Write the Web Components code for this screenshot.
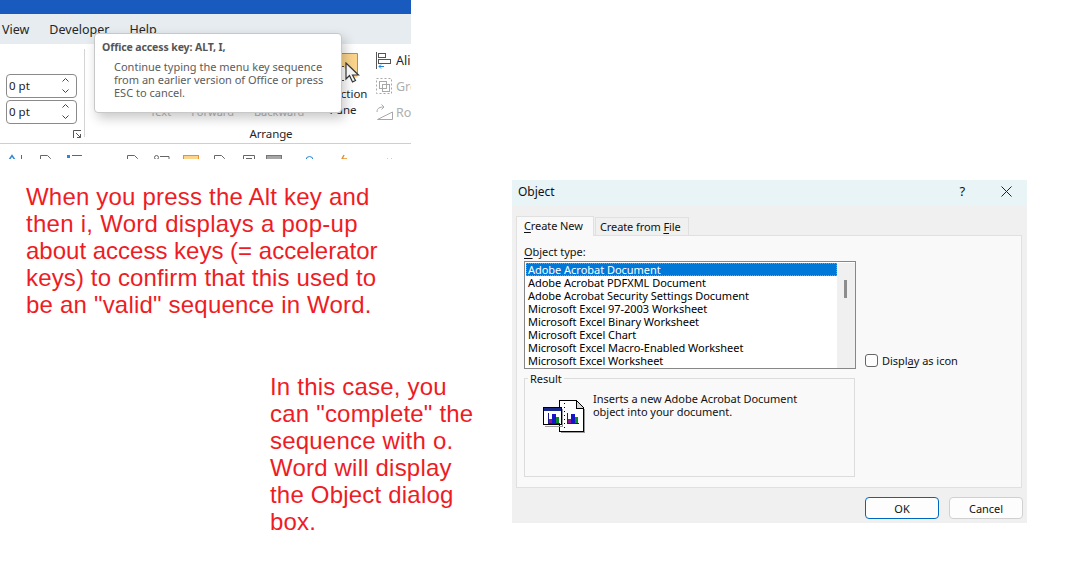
<!DOCTYPE html>
<html>
<head>
<meta charset="utf-8">
<title>Office access key</title>
<style>
  html, body { margin: 0; padding: 0; background: #fff; }
  body { width: 1090px; height: 577px; overflow: hidden; font-family: "Noto Sans", sans-serif; }
  .lower { display: flex; align-items: flex-start; }
</style>
</head>
<body>
<ribbon-shot></ribbon-shot>
<div class="lower">
  <annotation-notes></annotation-notes>
  <object-dialog></object-dialog>
</div>

<script>
// small helper, every element is just a template in a shadow root
function define(name, html, setup) {
  const tmpl = document.createElement("template");
  tmpl.innerHTML = html;
  customElements.define(name, class extends HTMLElement {
    constructor() {
      super();
      this.attachShadow({ mode: "open" }).appendChild(tmpl.content.cloneNode(true));
    }
    connectedCallback() {
      if (setup) setup(this);
    }
  });
}

// spin box of the ribbon
define("spin-box", `
  <style>
    :host { display: flex; align-items: center; justify-content: space-between; box-sizing: border-box;
      width: 71px; height: 24px; padding: 0 6px 1px 2px; border: 1px solid #8a8a8a; border-radius: 4px;
      font: 11.5px "Noto Sans", sans-serif; color: #222; background: #fff; }
    svg { display: block; }
  </style>
  <slot></slot>
  <svg width="9" height="17" viewBox="0 0 9 17" fill="none" stroke="#444" stroke-width="1">
    <path d="M1.5 4.5 4.5 1.5 7.5 4.5"/><path d="M1.5 12.5 4.5 15.5 7.5 12.5"/>
  </svg>
`);

// the "Office access key" tooltip, lies over the ribbon
define("access-tooltip", `
  <style>
    :host { display: block; position: absolute; left: 94px; top: 33px; box-sizing: border-box;
      width: 248px; height: 80px; padding: 7px 6px 0 7px; background: #fff; border: 1px solid #c8c8c8;
      border-radius: 4px; box-shadow: 3px 5px 12px rgba(0,0,0,.22); color: #5c5c5c;
      font: 11px/13px "Noto Sans", sans-serif; }
    b { display: block; font-size: 10.5px; font-weight: 700; color: #555; margin-bottom: 6px; letter-spacing: -.1px; }
    p { margin: 0 0 0 12px; letter-spacing: 0; }
  </style>
  <b>Office access key: ALT, I,</b>
  <p>Continue typing the menu key sequence<br>from an earlier version of Office or press<br>ESC to cancel.</p>
`);

define("ribbon-shot", `
  <style>
    :host { display: block; position: relative; width: 411px; height: 159px; overflow: hidden;
      font: 12px "Noto Sans", sans-serif; color: #262626; background: #fff; }
    .title { height: 14px; background: #185abd; }
    .tabs { height: 30px; background: #e6ecf0; display: flex; gap: 20px; padding: 7px 0 0 2px; box-sizing: border-box;
      font-size: 12.5px; line-height: 17px; }
    .body { height: 99px; display: flex; border-bottom: 1px solid #cfcfcf; }
    .spins { flex: 0 0 84px; box-sizing: border-box; padding: 30px 0 0 6px; display: flex; flex-direction: column; gap: 2px; position: relative; }
    .launcher { position: absolute; left: 73px; top: 86px; }
    .sep { flex: 0 0 1px; height: 88px; margin-top: 5px; background: #d4d4d4; }
    .arrange { flex: 0 0 286px; display: flex; flex-direction: column; position: relative; }
    .btns { height: 78px; display: flex; }
    .faded { display: flex; gap: 20px; padding: 60px 0 0 65px; color: #b5b5b5; font-size: 11px; line-height: 16px; height: 16px; width: 180px; box-sizing: border-box; flex: none; }
    .sel { margin-left: 50px; padding-top: 9px; width: 56px; flex: none; box-sizing: border-box; font-size: 11.5px; line-height: 16px; text-align: center; }
    .sel svg { display: block; margin: 0 0 5px 15px; }
    .group { text-align: center; line-height: 16px; margin-top: 4px; padding-left: 86px; font-size: 11.5px; letter-spacing: -.1px; }
    .side { flex: 0 0 40px; box-sizing: border-box; padding: 6px 0 0 5px; display: flex; flex-direction: column; gap: 6px; white-space: nowrap; }
    .side div { display: flex; align-items: center; gap: 2px; height: 20px; font-size: 12.5px; }
    .off { color: #aeaeae; }
    .quick { height: 15px; }
    .quick svg { display: block; margin-top: 1px; }
    .cursor { position: absolute; left: 345px; top: 62px; }
  </style>
  <div class="title"></div>
  <div class="tabs"><span>View</span><span>Developer</span><span>Help</span></div>
  <div class="body">
    <div class="spins">
      <spin-box>0 pt</spin-box>
      <spin-box>0 pt</spin-box>
      <svg class="launcher" width="9" height="9" viewBox="0 0 9 9" fill="none" stroke="#555">
        <path d="M.5 8V.5H8"/><path d="M3 3 7.5 7.5M7.500 4v3.500H4"/>
      </svg>
    </div>
    <div class="sep"></div>
    <div class="arrange">
      <div class="btns">
        <div class="faded"><span>Text</span><span>Forward</span><span>Backward</span></div>
        <div class="sel">
          <svg width="28" height="28" viewBox="0 0 28 28" fill="none">
            <path d="M.5.5h27v24h-4L12 12.500H.5z" fill="#fbd58c" stroke="none"/>
            <path d="M.5.5h27V20" stroke="#d9822b"/>
            <path d="M11 13.500h3M11 27.500h3" stroke="#444"/>
          </svg>
          Selection<br>Pane
        </div>
      </div>
      <div class="group">Arrange</div>
    </div>
    <div class="side">
      <div><svg width="18" height="17" viewBox="0 0 18 17" fill="none" stroke="#555"><path d="M.5 0v17"/><rect x="2.500" y="1.500" width="7" height="4"/><rect x="2.500" y="7.500" width="12" height="4"/><path d="M3 14.500h5M5 12.500l-2 2 2 2" stroke="#1f86d9"/></svg>Ali</div>
      <div class="off"><svg width="18" height="17" viewBox="0 0 18 17" fill="none" stroke="#a8a8a8"><path stroke-dasharray="2 2" d="M.5.5h15v15H.5z"/><rect x="3.500" y="3.500" width="7" height="7"/><rect x="6.500" y="6.500" width="7" height="7"/></svg>Gro</div>
      <div class="off"><svg width="18" height="17" viewBox="0 0 18 17" fill="none" stroke="#a8a8a8"><path d="M1.500 15.500 16.500 8v7.500z"/><path d="M1 8c0-4 3-5 7-5M5.500.5 8 3 5.500 5.500"/></svg>Rot</div>
    </div>
  </div>
  <div class="quick">
    <svg width="411" height="15" viewBox="0 0 411 15" fill="none" stroke="#666">
      <path d="M9 15 12 10.500 15 15" stroke="#2b88d8" stroke-width="1.500"/><path d="M21.500 10v5"/>
      <path d="M40.500 15v-4.500h7l3 3v2"/>
      <rect x="67" y="10" width="3" height="3" fill="#2b88d8" stroke="none"/><path d="M72 10.500h10"/>
      <path d="M127.500 15v-4.500h7l3 3v2"/>
      <circle cx="156.500" cy="12.500" r="2"/><path d="M160 11.500h9v3"/>
      <rect x="183.500" y="10.500" width="15" height="6" fill="#fbd58c" stroke="#e8912d"/>
      <path d="M214.500 15v-4.500h7l3 3v2"/>
      <path d="M243.500 15v-4.500h11v4.500M246 13.500h6"/>
      <rect x="266.500" y="10.500" width="15" height="6" fill="#a6a6a6" stroke="#777"/>
      <circle cx="309.500" cy="15" r="3.500" stroke="#2b88d8"/>
      <path d="M344 10 342 14h5" stroke="#e8912d" stroke-width="1.500"/>
      <path d="M387.500 13v2M391.500 13v2" stroke="#ccc"/>
    </svg>
  </div>
  <access-tooltip></access-tooltip>
  <svg class="cursor" width="16" height="22" viewBox="0 0 16 22">
    <path d="M1 1v16l3.500-3.500 3 6.500 3-1.500-3-5.500h6z" fill="#f4f4f4" stroke="#333" stroke-width="1.200"/>
  </svg>
`);

// red notes on the white page
define("annotation-notes", `
  <style>
    :host { display: block; width: 512px; flex: none; box-sizing: border-box; padding: 24px 0 0 26px;
      font: 24px/27px "Liberation Sans", Arial, sans-serif; letter-spacing: .2px; color: #ee1c25; }
    p { margin: 0; }
    .second { margin: 55px 0 0 244px; }
    .l2 { letter-spacing: .27px; }
    .l3 { letter-spacing: 0; }
    .l4 { letter-spacing: .14px; }
  </style>
  <p>When you press the Alt key and<br><span class="l2">then i, Word displays a pop-up</span><br><span class="l3">about access keys (= accelerator</span><br><span class="l4">keys) to confirm that this used to</span><br>be an "valid" sequence in Word.</p>
  <p class="second">In this case, you<br>can "complete" the<br>sequence with o.<br>Word will display<br>the Object dialog<br>box.</p>
`);

// object type list with its scrollbar
define("object-list", `
  <style>
    :host { display: flex; box-sizing: border-box; width: 332px; height: 108px; border: 1px solid #878787;
      background: #fff; color: #000; overflow: hidden; }
    .rows { flex: 1; padding: 1px 0 0 1px; min-width: 0; }
    .scroll { width: 18px; background: #f0f0f0; padding: 17px 0 0 7px; box-sizing: border-box; margin-top: 1px; }
    .thumb { width: 3px; height: 18px; background: #8d8d8d; }
    ::slotted(div) { height: 13px; line-height: 13px; padding-left: 2px; white-space: nowrap; }
    ::slotted(.sel) { background: #0078d7; color: #fff; outline: 1px dotted #e08a2c; outline-offset: -1px; }
  </style>
  <div class="rows"><slot></slot></div>
  <div class="scroll"><div class="thumb"></div></div>
`);

// dialog button
define("dlg-button", `
  <style>
    :host { display: flex; align-items: center; justify-content: center; box-sizing: border-box; width: 74px; height: 22px;
      background: #fdfdfd; border: 1px solid #d0d0d0; border-radius: 4px; color: #111; }
    :host([primary]) { border-color: #0067c0; }
  </style>
  <slot></slot>
`);

define("object-dialog", `
  <style>
    :host { display: block; width: 515px; height: 343px; margin-top: 21px; background: #f0f0f0; flex: none;
      font: 11px "Noto Sans", sans-serif; color: #111; letter-spacing: -.03px; }
    .bar { box-sizing: border-box; height: 26px; background: #e9f4f7; display: flex; align-items: center; padding: 0 15px 4px 6px; font-size: 12px; }
    .name { flex: 1; }
    .help { margin-right: 36px; flex: none; font-size: 13px; }
    .bar svg { display: block; }
    .tabs { display: flex; align-items: flex-end; height: 29px; padding-left: 4px; gap: 1px; }
    .tab { box-sizing: border-box; height: 18px; width: 94px; padding: 0 0 0 4px; line-height: 17px; background: #f0f0f0; border: 1px solid #e0e0e0; border-bottom: 0; letter-spacing: -.1px; white-space: nowrap; }
    .tab.on { height: 20px; width: 78px; background: #f9f9f9; padding-left: 7px; position: relative; top: 1px; z-index: 1; line-height: 18px; }
    .panel { box-sizing: border-box; margin-left: 4px; width: 506px; height: 253px; border: 1px solid #e0e0e0; background: #f9f9f9;
      display: flex; padding: 9px 0 0 7px; }
    .left { width: 332px; flex: none; }
    .lbl { height: 16px; line-height: 13px; }
    fieldset { box-sizing: border-box; width: 331px; height: 99px; margin: 9px 0 0; padding: 13px 0 0 18px; border: 1px solid #dcdcdc; display: block; position: relative; }
    legend { padding: 0 2px; margin-left: 3px; line-height: 12px; position: absolute; top: -6px; left: 0; background: #f9f9f9; }
    .res { display: flex; gap: 7px; line-height: 13px; }
    .res svg { flex: none; display: block; margin-top: 8px; }
    .chk { display: flex; align-items: center; gap: 4px; height: 14px; margin: 108px 0 0 9px; white-space: nowrap; }
    .box { box-sizing: border-box; width: 13px; height: 13px; border: 1px solid #666; border-radius: 3px; background: #fdfdfd; }
    .foot { display: flex; justify-content: flex-end; gap: 10px; padding: 9px 4px 0 0; }
    u { text-underline-offset: 2px; }
  </style>
  <div class="bar">
    <span class="name">Object</span>
    <span class="help">?</span>
    <svg width="11" height="11" viewBox="0 0 11 11" stroke="#222" fill="none"><path d="M.5.5 10.500 10.500M10.500.5.5 10.500"/></svg>
  </div>
  <div class="tabs">
    <div class="tab on"><u>C</u>reate New</div>
    <div class="tab">Create from <u>F</u>ile</div>
  </div>
  <div class="panel">
    <div class="left">
      <div class="lbl"><u>O</u>bject type:</div>
      <object-list>
        <div class="sel">Adobe Acrobat Document</div>
        <div>Adobe Acrobat PDFXML Document</div>
        <div>Adobe Acrobat Security Settings Document</div>
        <div>Microsoft Excel 97-2003 Worksheet</div>
        <div>Microsoft Excel Binary Worksheet</div>
        <div>Microsoft Excel Chart</div>
        <div>Microsoft Excel Macro-Enabled Worksheet</div>
        <div>Microsoft Excel Worksheet</div>
      </object-list>
      <fieldset>
        <legend>Result</legend>
        <div class="res">
          <svg width="43" height="33" viewBox="0 0 43 33" shape-rendering="crispEdges">
            <path d="M16.500.5H33L40.500 8v23.500h-24z" fill="#fff" stroke="#000"/>
            <path d="M33 1v7h7" fill="#d8d8d8" stroke="#000"/>
            <path d="M41.500 9v23.500H18" fill="none" stroke="#9a9a9a"/>
            <path d="M21.500 3v27" stroke="#000" stroke-dasharray="1 3"/>
            <path d="M24.500 13v10h11" fill="none" stroke="#1a1a8c"/>
            <rect x="25" y="19" width="3" height="4" fill="#8a1a8c"/><rect x="28" y="14" width="4" height="9" fill="#1414c8"/><rect x="32" y="17" width="3" height="6" fill="#0a8a2a"/>
            <rect x=".5" y="7.500" width="18" height="17" fill="#fff" stroke="#000"/>
            <path d="M19.500 9v17H2" fill="none" stroke="#9a9a9a"/>
            <rect x="1" y="8" width="17" height="3" fill="#1a2a8c"/>
            <path d="M5.500 13v10h11" fill="none" stroke="#1a1a8c"/>
            <rect x="6" y="19" width="3" height="4" fill="#8a1a8c"/><rect x="9" y="14" width="4" height="9" fill="#1414c8"/><rect x="13" y="17" width="3" height="6" fill="#0a8a2a"/>
          </svg>
          <div>Inserts a new Adobe Acrobat Document<br>object into your document.</div>
        </div>
      </fieldset>
    </div>
    <div class="chk"><span class="box"></span><span>Displ<u>a</u>y as icon</span></div>
  </div>
  <div class="foot">
    <dlg-button primary>OK</dlg-button>
    <dlg-button>Cancel</dlg-button>
  </div>
`);
</script>
</body>
</html>
